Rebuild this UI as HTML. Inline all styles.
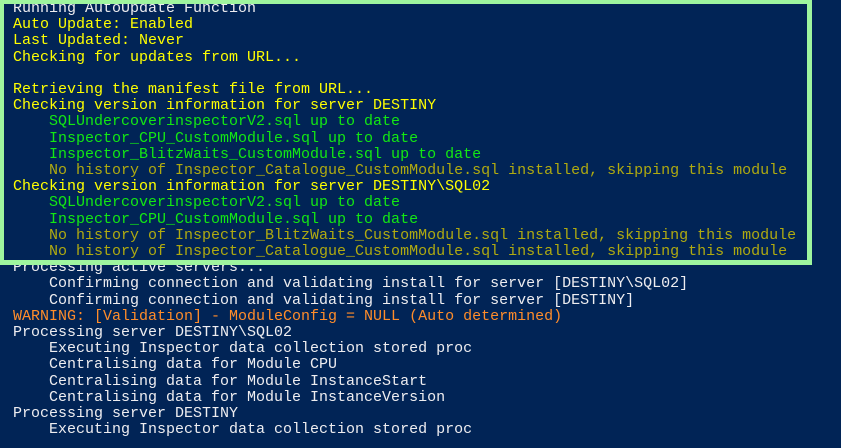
<!DOCTYPE html>
<html><head><style>
html,body{margin:0;padding:0;background:#012456;width:841px;height:448px;overflow:hidden}
pre{position:absolute;left:13px;top:1px;margin:0;font-family:"Liberation Mono",monospace;font-size:15px;line-height:16.2px;color:#eeedf0}
.y{color:#ffff00}.g{color:#13e813}.o{color:#b0aa10}.w{color:#ff8c2a}
.box{position:absolute;left:0;top:0;width:803px;height:256px;border:5px solid #9ef59e;border-left-width:4px;border-top-width:4px}
</style></head><body>
<pre>Running AutoUpdate Function
<span class="y">Auto Update: Enabled
Last Updated: Never
Checking for updates from URL...

Retrieving the manifest file from URL...
Checking version information for server DESTINY</span>
<span class="g">    SQLUndercoverinspectorV2.sql up to date
    Inspector_CPU_CustomModule.sql up to date
    Inspector_BlitzWaits_CustomModule.sql up to date</span>
<span class="o">    No history of Inspector_Catalogue_CustomModule.sql installed, skipping this module</span>
<span class="y">Checking version information for server DESTINY\SQL02</span>
<span class="g">    SQLUndercoverinspectorV2.sql up to date
    Inspector_CPU_CustomModule.sql up to date</span>
<span class="o">    No history of Inspector_BlitzWaits_CustomModule.sql installed, skipping this module
    No history of Inspector_Catalogue_CustomModule.sql installed, skipping this module</span>
Processing active servers...
    Confirming connection and validating install for server [DESTINY\SQL02]
    Confirming connection and validating install for server [DESTINY]
<span class="w">WARNING: [Validation] - ModuleConfig = NULL (Auto determined)</span>
Processing server DESTINY\SQL02
    Executing Inspector data collection stored proc
    Centralising data for Module CPU
    Centralising data for Module InstanceStart
    Centralising data for Module InstanceVersion
Processing server DESTINY
    Executing Inspector data collection stored proc
</pre>
<div class="box"></div>
</body></html>
